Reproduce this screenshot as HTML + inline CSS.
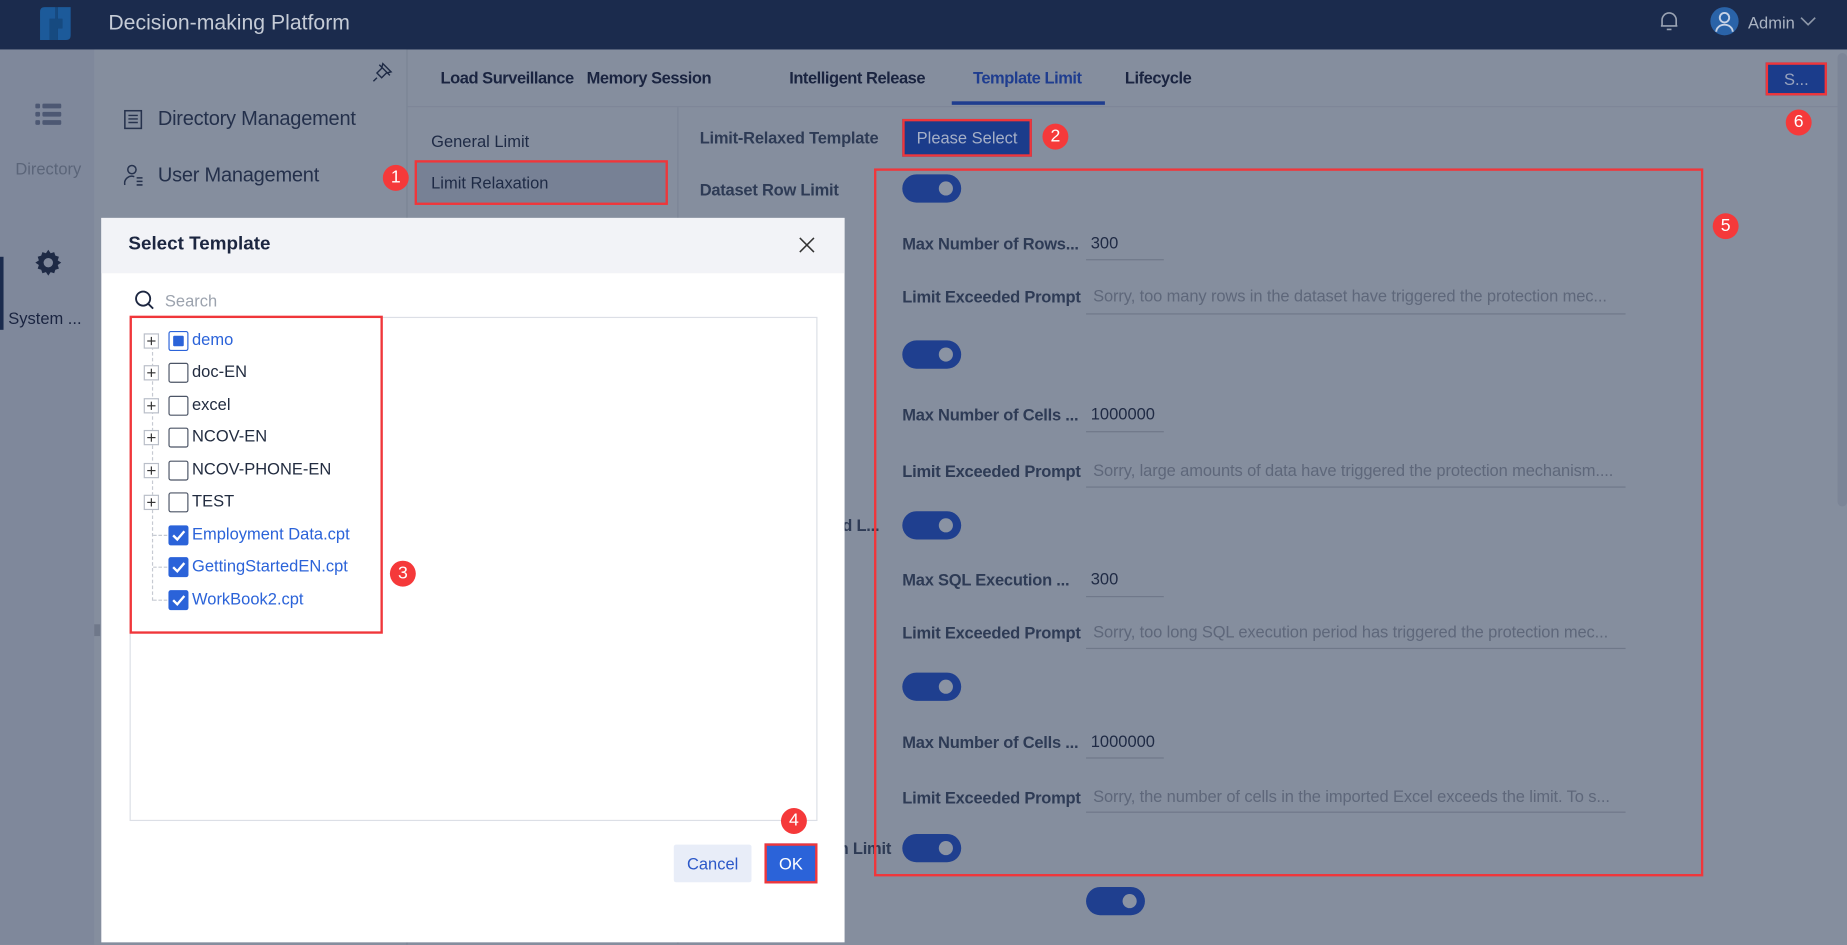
<!DOCTYPE html>
<html><head><meta charset="utf-8"><style>
*{margin:0;padding:0;box-sizing:border-box}
html,body{width:1847px;height:895px;overflow:hidden;background:#858e9e;font-family:"Liberation Sans",Arial,sans-serif}
#w{position:absolute;left:0;top:0;width:1568px;height:800px;transform:scale(1.17793);transform-origin:0 0;background:#858e9e}
.a{position:absolute;white-space:nowrap}
.b{font-weight:bold}
.badge{position:absolute;width:22px;height:22px;border-radius:50%;background:#f5393a;color:#fff;font-size:15px;text-align:center;line-height:22px}
.red{position:absolute;border:2px solid #f0363a}
.tog{position:absolute;width:50px;height:24px;border-radius:12px;background:#1f3f8f}
.tog:after{content:"";position:absolute;right:7px;top:6px;width:12px;height:12px;border-radius:50%;background:#8a93a3}
.lbl{position:absolute;font-weight:bold;font-size:14px;color:#2e3b55;white-space:nowrap;letter-spacing:-0.2px}
.val{position:absolute;font-size:14px;color:#1f2a44}
.ul{position:absolute;height:1px;background:#6f7889}
.ph{position:absolute;font-size:14px;color:#5e677a;white-space:nowrap;letter-spacing:-0.1px}
.tab{position:absolute;top:58px;font-weight:bold;font-size:14px;color:#1a2440;letter-spacing:-0.4px}
.row{position:absolute;left:0;height:20px;font-size:14px;color:#222c40}
.cb{position:absolute;left:32px;top:1px;width:17px;height:17px;border:1px solid #4c5566;border-radius:2px;background:#fff}
.cb.on{background:#2b63d9;border-color:#2b63d9}
.pl{position:absolute;left:11px;top:3px;width:13px;height:13px;border:1px solid #b9bec8;background:#fff}
.pl:before{content:"";position:absolute;left:2px;top:5px;width:7px;height:1px;background:#333}
.pl:after{content:"";position:absolute;left:5px;top:2px;width:1px;height:7px;background:#333}
.tx{position:absolute;left:52px;top:0}
</style></head><body><div id="w">
<!-- header -->
<div class="a" style="left:0;top:0;width:1568px;height:42px;background:#1b2b4d"></div>
<div class="a" style="left:30px;top:4px;width:34px;height:32px">
<svg width="34" height="32" viewBox="0 0 34 32"><path d="M4 6 Q4 2 8 2 H17 V12 H12 V30 H4Z" fill="#1c5a9a"/><path d="M19 2 H30 V26 Q30 30 26 30 H19 V20 H23 V12 H19Z" fill="#1c5a9a"/><path d="M12 12 H17 V2 H19 V12 H23 V20 H19 V30 H12Z" fill="#164a80"/></svg></div>
<div class="a" style="left:92px;top:9px;font-size:18px;color:#c5cbd6">Decision-making Platform</div>
<svg class="a" style="left:1408px;top:8px" width="18" height="20" viewBox="0 0 18 20"><path d="M3 14 V9 a6 6 0 0 1 12 0 V14 H16 H2Z M7 17 H11" fill="none" stroke="#9aa3b3" stroke-width="1.4"/></svg>
<div class="a" style="left:1452px;top:6px;width:24px;height:24px;border-radius:50%;background:#2a63a8"></div>
<svg class="a" style="left:1452px;top:6px" width="24" height="24" viewBox="0 0 24 24"><circle cx="12" cy="9" r="4" fill="none" stroke="#c8d3e6" stroke-width="1.6"/><path d="M5 21 a7 6 0 0 1 14 0" fill="none" stroke="#c8d3e6" stroke-width="1.6"/></svg>
<div class="a" style="left:1484px;top:11px;font-size:14px;color:#aab3c2">Admin</div>
<svg class="a" style="left:1527px;top:13px" width="16" height="10" viewBox="0 0 16 10"><path d="M2 2 L8 8 L14 2" fill="none" stroke="#8d97a8" stroke-width="1.4"/></svg>
<!-- left rail -->
<div class="a" style="left:0;top:42px;width:80px;height:760px;background:#7f889b"></div>
<div class="a" style="left:0;top:218px;width:3px;height:62px;background:#1b2b4d"></div>
<svg class="a" style="left:29px;top:86px" width="24" height="22" viewBox="0 0 24 22"><g fill="#4d5873"><rect x="1" y="2" width="4" height="4" rx="1"/><rect x="7" y="2" width="16" height="4" rx="1"/><rect x="1" y="9" width="4" height="4" rx="1"/><rect x="7" y="9" width="16" height="4" rx="1"/><rect x="1" y="16" width="4" height="4" rx="1"/><rect x="7" y="16" width="16" height="4" rx="1"/></g></svg>
<div class="a" style="left:13px;top:135px;font-size:14px;color:#5b6579">Directory</div>
<svg class="a" style="left:29px;top:211px" width="24" height="24" viewBox="0 0 24 24"><path d="M12 1 l2 3 3-1 1 3 3 1-1 3 3 2-3 2 1 3-3 1-1 3-3-1-2 3-2-3-3 1-1-3-3-1 1-3-3-2 3-2-1-3 3-1 1-3 3 1z" fill="#1e2a45"/><circle cx="12" cy="12" r="4" fill="#7f889b"/></svg>
<div class="a" style="left:7px;top:262px;font-size:14px;color:#1a2440">System ...</div>
<!-- menu panel -->
<div class="a" style="left:80px;top:42px;width:265px;height:760px;background:#858e9e"></div>
<div class="a" style="left:80px;top:530px;width:5px;height:10px;background:#6f788a"></div>
<svg class="a" style="left:316px;top:52px" width="18" height="18" viewBox="0 0 18 18"><path d="M6 3 L15 12 M9 2 L16 9 L12 10 L8 14 L4 10 L8 6Z M4 14 L1 17" fill="none" stroke="#1e2a45" stroke-width="1.2"/></svg>
<svg class="a" style="left:105px;top:93px" width="16" height="17" viewBox="0 0 16 17"><rect x="1" y="1" width="14" height="15" fill="none" stroke="#26324d" stroke-width="1.3"/><path d="M4 5H12M4 8H12M4 11H12" stroke="#26324d" stroke-width="1.2"/></svg>
<div class="a" style="left:134px;top:91px;font-size:17px;color:#24304b;letter-spacing:-0.2px">Directory Management</div>
<svg class="a" style="left:105px;top:139px" width="17" height="19" viewBox="0 0 17 19"><circle cx="7" cy="5" r="3.5" fill="none" stroke="#26324d" stroke-width="1.3"/><path d="M1 18 a6 6 0 0 1 8 -7 M11 12H16M11 15H16M11 18H16" fill="none" stroke="#26324d" stroke-width="1.3"/></svg>
<div class="a" style="left:134px;top:139px;font-size:17px;color:#24304b;letter-spacing:-0.2px">User Management</div>
<!-- tabs -->
<div class="a" style="left:345px;top:42px;width:1px;height:760px;background:#7b8495"></div>
<div class="a" style="left:346px;top:90px;width:1214px;height:1px;background:#7e8798"></div>
<div class="tab" style="left:374px">Load Surveillance</div>
<div class="tab" style="left:498px">Memory Session</div>
<div class="tab" style="left:670px">Intelligent Release</div>
<div class="tab" style="left:826px;color:#1f3d8f">Template Limit</div>
<div class="tab" style="left:955px">Lifecycle</div>
<div class="a" style="left:808px;top:86px;width:130px;height:3px;background:#1f3d8f"></div>
<div class="a" style="left:1499px;top:53px;width:52px;height:28px;background:#1b3c8b;border:2px solid #f0363a;color:#98a3bd;font-size:14px;text-align:center;line-height:24px">S...</div>
<div class="badge" style="left:1516px;top:93px">6</div>
<div class="a" style="left:1560px;top:45px;width:8px;height:385px;background:#7c8597;border-radius:4px"></div>
<!-- subtabs -->
<div class="a" style="left:575px;top:91px;width:1px;height:710px;background:#7b8495"></div>
<div class="a" style="left:366px;top:112px;font-size:14px;color:#1e2a45">General Limit</div>
<div class="a" style="left:352px;top:137px;width:215px;height:36px;background:#778195"></div>
<div class="red" style="left:352px;top:136px;width:215px;height:38px"></div>
<div class="a" style="left:366px;top:147px;font-size:14px;color:#1e2a45">Limit Relaxation</div>
<div class="badge" style="left:325px;top:140px">1</div>
<!-- content -->
<div class="lbl" style="left:594px;top:109px">Limit-Relaxed Template</div>
<div class="a" style="left:766px;top:101px;width:110px;height:32px;background:#1b3c8b;border:2px solid #f0363a;color:#a6b0c7;font-size:14px;text-align:center;line-height:28px">Please Select</div>
<div class="badge" style="left:885px;top:105px">2</div>
<div class="lbl" style="left:594px;top:153px">Dataset Row Limit</div>
<div class="lbl" style="left:708px;top:293px">t</div>
<div class="lbl" style="left:703px;top:438px">iod L...</div>
<div class="lbl" style="left:712px;top:712px">n Limit</div>
<div class="tog" style="left:766px;top:148px"></div>
<div class="tog" style="left:766px;top:289px"></div>
<div class="tog" style="left:766px;top:434px"></div>
<div class="tog" style="left:766px;top:571px"></div>
<div class="tog" style="left:766px;top:708px"></div>
<div class="tog" style="left:922px;top:753px"></div>
<div class="lbl" style="left:766px;top:199px">Max Number of Rows...</div><div class="val" style="left:926px;top:198px">300</div><div class="ul" style="left:922px;top:220px;width:66px"></div>
<div class="lbl" style="left:766px;top:244px">Limit Exceeded Prompt</div><div class="ph" style="left:928px;top:243px">Sorry, too many rows in the dataset have triggered the protection mec...</div><div class="ul" style="left:922px;top:266px;width:458px"></div>
<div class="lbl" style="left:766px;top:344px">Max Number of Cells ...</div><div class="val" style="left:926px;top:343px">1000000</div><div class="ul" style="left:922px;top:366px;width:66px"></div>
<div class="lbl" style="left:766px;top:392px">Limit Exceeded Prompt</div><div class="ph" style="left:928px;top:391px">Sorry, large amounts of data have triggered the protection mechanism....</div><div class="ul" style="left:922px;top:413px;width:458px"></div>
<div class="lbl" style="left:766px;top:484px">Max SQL Execution ...</div><div class="val" style="left:926px;top:483px">300</div><div class="ul" style="left:922px;top:506px;width:66px"></div>
<div class="lbl" style="left:766px;top:529px">Limit Exceeded Prompt</div><div class="ph" style="left:928px;top:528px">Sorry, too long SQL execution period has triggered the protection mec...</div><div class="ul" style="left:922px;top:550px;width:458px"></div>
<div class="lbl" style="left:766px;top:622px">Max Number of Cells ...</div><div class="val" style="left:926px;top:621px">1000000</div><div class="ul" style="left:922px;top:643px;width:66px"></div>
<div class="lbl" style="left:766px;top:669px">Limit Exceeded Prompt</div><div class="ph" style="left:928px;top:668px">Sorry, the number of cells in the imported Excel exceeds the limit. To s...</div><div class="ul" style="left:922px;top:689px;width:458px"></div>
<div class="red" style="left:742px;top:143px;width:704px;height:601px"></div>
<div class="badge" style="left:1454px;top:181px">5</div>
<!-- modal -->
<div class="a" style="left:86px;top:185px;width:631px;height:615px;background:#fff"></div>
<div class="a" style="left:86px;top:185px;width:631px;height:47px;background:#f2f3f7"></div>
<div class="a b" style="left:109px;top:199px;font-size:16px;color:#1c2640">Select Template</div>
<svg class="a" style="left:678px;top:201px" width="14" height="14" viewBox="0 0 14 14"><path d="M1 1L13 13M13 1L1 13" stroke="#333" stroke-width="1.3"/></svg>
<svg class="a" style="left:114px;top:246px" width="18" height="18" viewBox="0 0 18 18"><circle cx="7.5" cy="7.5" r="6" fill="none" stroke="#1c2640" stroke-width="1.6"/><path d="M12 12L16 16" stroke="#1c2640" stroke-width="1.6"/></svg>
<div class="a" style="left:140px;top:247px;font-size:14px;color:#9ca3ae">Search</div>
<div class="a" style="left:110px;top:269px;width:584px;height:428px;border:1px solid #dcdfe6"></div>
<div class="a" style="left:111px;top:270px;width:214px;height:268px">
<div class="a" style="left:18px;top:14px;width:0;height:226px;border-left:1px dashed #c6cad2"></div>
<div class="row" style="top:10px"><div class="pl"></div><div class="cb" style="border-color:#2b63d9"><div style="position:absolute;left:3px;top:3px;width:9px;height:9px;background:#2b63d9;border-radius:1px"></div></div><div class="tx" style="color:#2b63d9">demo</div></div>
<div class="row" style="top:37px"><div class="pl"></div><div class="cb"></div><div class="tx">doc-EN</div></div>
<div class="row" style="top:65px"><div class="pl"></div><div class="cb"></div><div class="tx">excel</div></div>
<div class="row" style="top:92px"><div class="pl"></div><div class="cb"></div><div class="tx">NCOV-EN</div></div>
<div class="row" style="top:120px"><div class="pl"></div><div class="cb"></div><div class="tx">NCOV-PHONE-EN</div></div>
<div class="row" style="top:147px"><div class="pl"></div><div class="cb"></div><div class="tx">TEST</div></div>
<div class="row" style="top:175px"><div class="a" style="left:19px;top:9px;width:12px;border-top:1px dashed #c6cad2"></div><div class="cb on"><svg width="15" height="15" viewBox="0 0 15 15"><path d="M3 7.5L6.5 11L12.5 4" fill="none" stroke="#fff" stroke-width="2"/></svg></div><div class="tx" style="color:#2b63d9">Employment Data.cpt</div></div>
<div class="row" style="top:202px"><div class="a" style="left:19px;top:9px;width:12px;border-top:1px dashed #c6cad2"></div><div class="cb on"><svg width="15" height="15" viewBox="0 0 15 15"><path d="M3 7.5L6.5 11L12.5 4" fill="none" stroke="#fff" stroke-width="2"/></svg></div><div class="tx" style="color:#2b63d9">GettingStartedEN.cpt</div></div>
<div class="row" style="top:230px"><div class="a" style="left:19px;top:9px;width:12px;border-top:1px dashed #c6cad2"></div><div class="cb on"><svg width="15" height="15" viewBox="0 0 15 15"><path d="M3 7.5L6.5 11L12.5 4" fill="none" stroke="#fff" stroke-width="2"/></svg></div><div class="tx" style="color:#2b63d9">WorkBook2.cpt</div></div>
</div>
<div class="red" style="left:110px;top:268px;width:215px;height:270px"></div>
<div class="badge" style="left:331px;top:476px">3</div>
<div class="a" style="left:572px;top:717px;width:66px;height:32px;background:#e8edf8;border-radius:2px;color:#2b58c8;font-size:14px;text-align:center;line-height:32px">Cancel</div>
<div class="a" style="left:649px;top:716px;width:45px;height:34px;background:#2b63d9;border:2px solid #f0363a;color:#fff;font-size:14px;text-align:center;line-height:30px">OK</div>
<div class="badge" style="left:663px;top:686px">4</div>
</div></body></html>
